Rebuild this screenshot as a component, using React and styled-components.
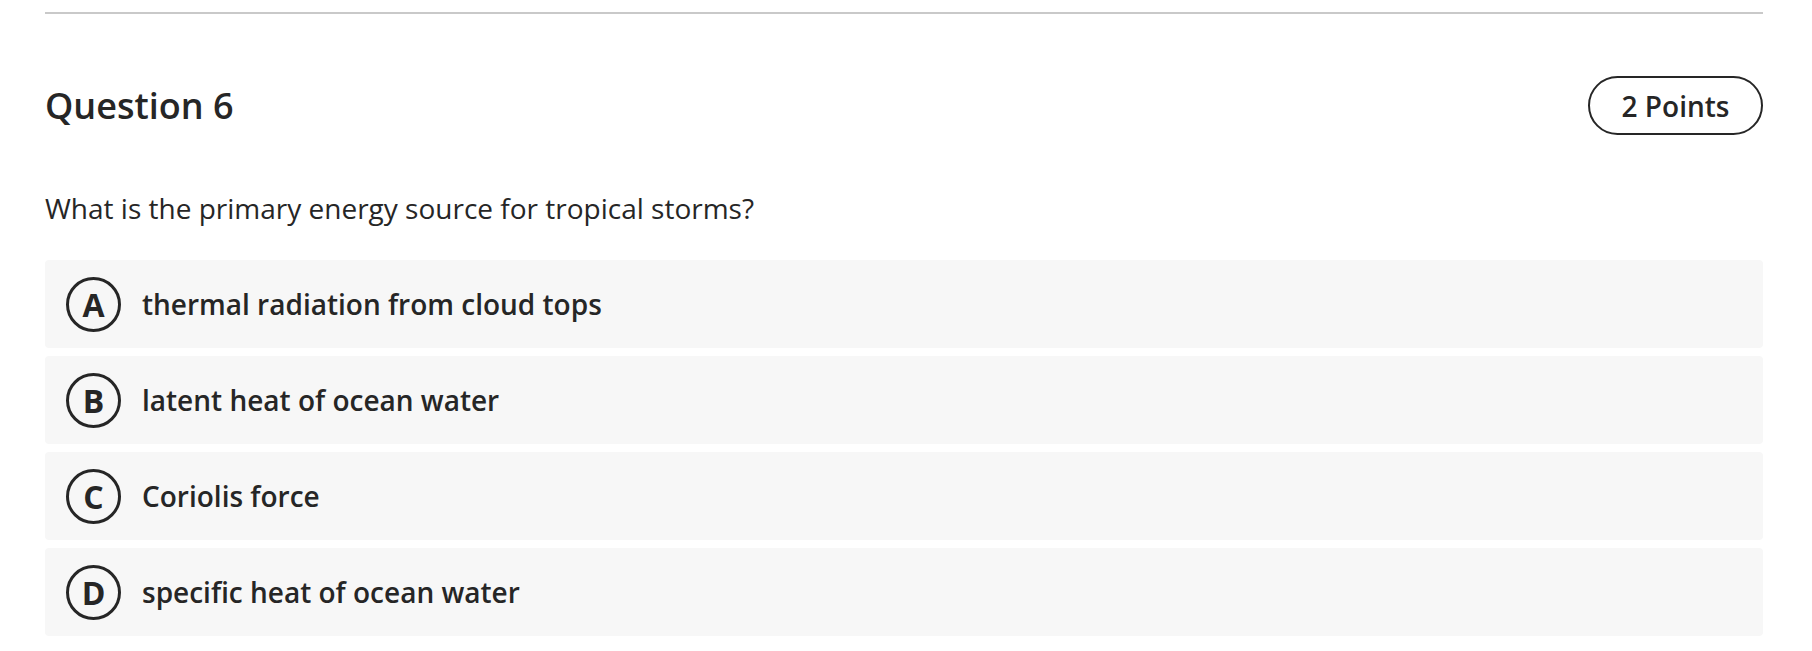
import styled, { createGlobalStyle } from 'styled-components';

const GlobalStyle = createGlobalStyle`
    body {
        margin: 0;
        background: #ffffff;
        font-family: 'Open Sans', 'Noto Sans', sans-serif;
        color: #262626;
    }
`;

const Page = styled.div`
    padding: 12px 49px 0 45px;
`;

const Divider = styled.hr`
    margin: 0;
    border: none;
    height: 2px;
    background-color: #c9c9c9;
`;

const Header = styled.div`
    display: flex;
    align-items: center;
    justify-content: space-between;
    margin-top: 62px;
`;

const Title = styled.h2`
    margin: 0;
    font-size: 36px;
    font-weight: 600;
    line-height: 1.2;
`;

const PointsPill = styled.div`
    display: flex;
    align-items: center;
    justify-content: center;
    box-sizing: border-box;
    width: 175px;
    height: 59px;
    border: 2px solid #262626;
    border-radius: 30px;
    font-size: 28px;
    font-weight: 600;
`;

const Prompt = styled.p`
    margin: 54px 0 0;
    font-size: 28px;
    line-height: 1.4;
`;

const Options = styled.div`
    display: flex;
    flex-direction: column;
    gap: 8px;
    margin-top: 32px;
`;

const Option = styled.div`
    display: flex;
    align-items: center;
    gap: 21px;
    height: 88px;
    padding: 0 21px;
    background-color: #f7f7f7;
    border-radius: 4px;
`;

const Letter = styled.span`
    display: flex;
    align-items: center;
    justify-content: center;
    box-sizing: border-box;
    width: 55px;
    height: 55px;
    border: 3px solid #262626;
    border-radius: 50%;
    font-size: 32px;
    font-weight: 700;
    flex-shrink: 0;
`;

const OptionText = styled.span`
    font-size: 28px;
    font-weight: 600;
`;

const answers = [
    { key: 'A', text: 'thermal radiation from cloud tops' },
    { key: 'B', text: 'latent heat of ocean water' },
    { key: 'C', text: 'Coriolis force' },
    { key: 'D', text: 'specific heat of ocean water' },
];

export default function App() {
    return (
        <>
            <GlobalStyle />
            <Page>
                <Divider />
                <Header>
                    <Title>Question 6</Title>
                    <PointsPill>2 Points</PointsPill>
                </Header>
                <Prompt>What is the primary energy source for tropical storms?</Prompt>
                <Options>
                    {answers.map((a) => (
                        <Option key={a.key}>
                            <Letter>{a.key}</Letter>
                            <OptionText>{a.text}</OptionText>
                        </Option>
                    ))}
                </Options>
            </Page>
        </>
    );
}
